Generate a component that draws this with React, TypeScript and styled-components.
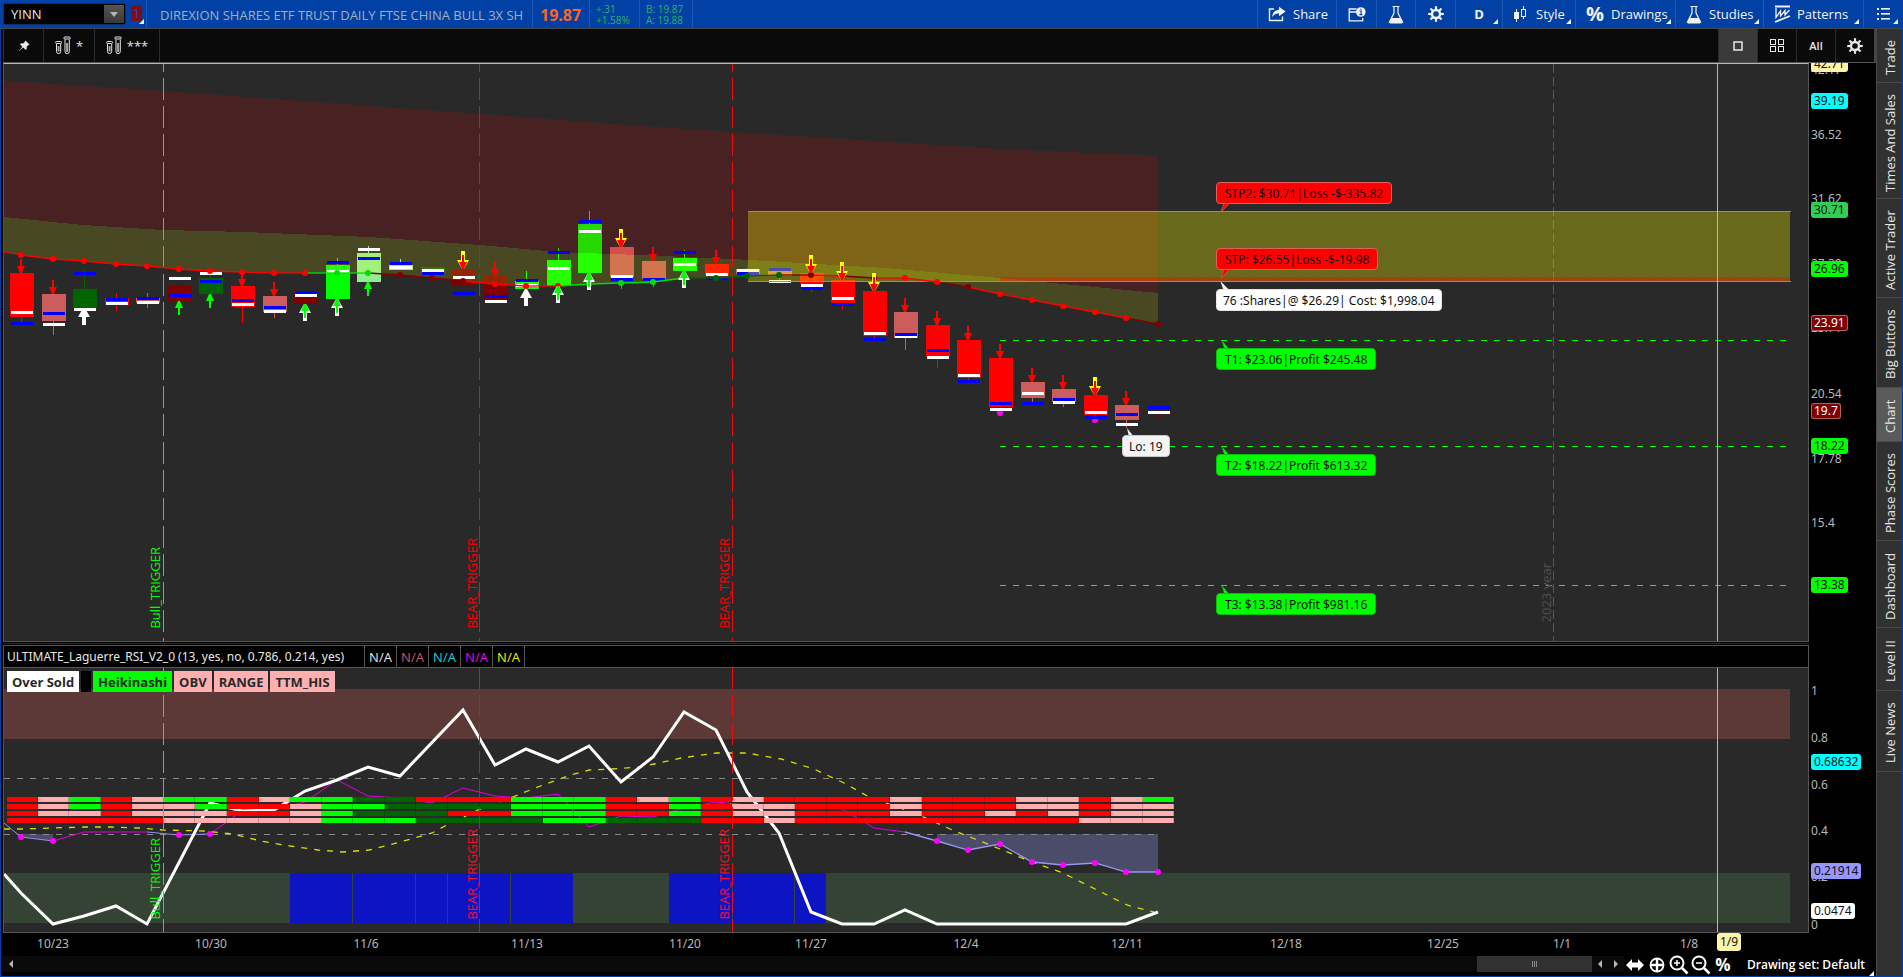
import React from 'react';
import styled, { createGlobalStyle, css } from 'styled-components';

const GlobalStyle = createGlobalStyle`
  html, body, #root { height: 100%; }
  body {
    margin: 0;
    background: #000;
    color: #e6e6e6;
    font-family: 'Open Sans', 'Noto Sans', sans-serif;
    font-size: 13px;
    line-height: 16px;
  }
  *, *::before, *::after { box-sizing: border-box; }
  button, input { font: inherit; color: inherit; }
  button { background: none; border: 0; padding: 0; }
`;

/* ---------- geometry shared by the plots and their labels ---------- */

const LEFT = 4;
const WIDTH = 1804;
const PRICE = { top: 64, height: 577 };
const STUDY = { top: 668, height: 264 };
type Pane = typeof PRICE;

const barX = (i: number) => Math.round(21 + 31.58 * i);
const pctX = (x: number) => `${((x - LEFT) / WIDTH) * 100}%`;
const pctY = (y: number, pane: Pane) => `${((y - pane.top) / pane.height) * 100}%`;

/* ---------- frame ---------- */

const Window = styled.div`
  display: flex;
  flex-direction: column;
  height: 100vh;
  min-height: 600px;
  overflow: hidden;
  border: 1px solid #0141a6;
  border-top: 0;
  background: #000;
`;

const TopBar = styled.header`
  display: flex;
  align-items: stretch;
  flex: none;
  height: 29px;
  background: #0141a6;
  border-bottom: 1px solid #44474d;
  padding-left: 2px;
`;

const Cell = styled.div<{ $width?: number; $pad?: number }>`
  display: flex;
  flex-direction: column;
  justify-content: center;
  flex: none;
  ${(p) => p.$width && `width: ${p.$width}px;`}
  padding-top: 2px;
  padding-left: ${(p) => p.$pad ?? 6}px;
  border-left: 1px solid #1f57b4;
  white-space: nowrap;
`;

const Symbol = styled.div`
  display: flex;
  align-items: center;
  align-self: center;
  width: 123px;
  height: 22px;
  padding: 1px;
  background: #000;
  border: 1px solid #10305f;
  border-radius: 2px;
`;

const SymbolInput = styled.input`
  flex: 1;
  min-width: 0;
  height: 18px;
  padding: 0 0 0 6px;
  background: #000;
  border: 0;
  outline: 0;
`;

const SymbolDrop = styled.button`
  display: flex;
  align-items: center;
  justify-content: center;
  width: 20px;
  height: 18px;
  background: linear-gradient(#555, #3a3a3a);
`;

const LinkBadge = styled.button`
  position: relative;
  align-self: center;
  width: 11px;
  height: 16px;
  margin: 0 4px 2px 5px;
  background: #7d0e14;
  border-radius: 3px;
  color: #2a4da6;
  line-height: 16px;
`;

const Company = styled.span`
  color: #a6adb8;
`;
const Last = styled.span`
  color: #ff6414;
  font-size: 16px;
  font-weight: 700;
`;
const Quote = styled.span`
  color: #2fb060;
  font-size: 10px;
  line-height: 11px;
`;

const Spacer = styled.div`
  flex: 1;
`;

const TopButton = styled.button<{ $width: number; $gap?: number }>`
  position: relative;
  display: flex;
  align-items: center;
  justify-content: flex-start;
  gap: ${(p) => p.$gap ?? 7}px;
  flex: none;
  width: ${(p) => p.$width}px;
  padding-left: 10px;
  border-left: 1px solid #1f57b4;
  color: #f2f2f2;
  white-space: nowrap;
`;

const TopIconButton = styled(TopButton)`
  justify-content: center;
  padding-left: 0;
`;

const Corner = styled.span`
  position: absolute;
  right: 4px;
  bottom: 4px;
  border-left: 5px solid transparent;
  border-bottom: 5px solid #f2f2f2;
`;

const BadgeCorner = styled(Corner)`
  right: -2px;
  bottom: -3px;
`;

const Percent = styled.b`
  font-size: 20px;
  line-height: 20px;
`;

const Body = styled.div`
  display: flex;
  flex: 1;
  min-height: 0;
`;

const Main = styled.main`
  display: flex;
  flex-direction: column;
  flex: 1;
  min-width: 0;
  margin-left: 2px;
`;

const Toolbar = styled.div`
  display: flex;
  flex: none;
  height: 34px;
  background: #0a0a0a;
  border-bottom: 1px solid #555;
  border-left: 1px solid #333;
  border-right: 2px solid #444;
`;

const Tool = styled.button<{ $width: number; $on?: boolean; $left?: boolean }>`
  display: flex;
  align-items: center;
  justify-content: center;
  gap: 5px;
  width: ${(p) => p.$width}px;
  background: ${(p) => (p.$on ? '#3a3a3a' : 'transparent')};
  color: #e6e6e6;
  ${(p) => (p.$left ? 'border-left' : 'border-right')}: 1px solid #2c2c2c;
`;

const Stars = styled.span`
  font-size: 13px;
`;

const AllText = styled.span`
  font-size: 11px;
  font-weight: 600;
`;

/* ---------- chart panes ---------- */

const PaneRow = styled.section<{ $grow: number }>`
  display: grid;
  grid-template-columns: 1fr 67px;
  flex: ${(p) => p.$grow} 1 0;
  min-height: 0;
`;

const Plot = styled.div<{ $cursor?: boolean }>`
  position: relative;
  overflow: hidden;
  background: #292929;
  border: 1px solid #555;
  border-top: ${(p) => (p.$cursor ? '1px solid #c4b98c' : '0')};
`;

const PlotSvg = styled.svg`
  display: block;
  position: absolute;
  inset: 0;
  width: 100%;
  height: 100%;
`;

const Axis = styled.div`
  position: relative;
  overflow: hidden;
  margin-bottom: 1px;
  font-family: 'Noto Sans', 'Open Sans', sans-serif;
`;

const AxisText = styled.span<{ $top: string }>`
  position: absolute;
  left: 2px;
  top: ${(p) => p.$top};
  margin-top: -8px;
  color: #b8b8b8;
  font-size: 12px;
`;

const tag = css<{ $bg: string; $fg?: string }>`
  padding: 0 3px;
  border-radius: 3px;
  background: ${(p) => p.$bg};
  color: ${(p) => p.$fg ?? '#111'};
  font-size: 12px;
`;

const AxisTag = styled.span<{ $top: string; $bg: string; $fg?: string }>`
  position: absolute;
  left: 2px;
  top: ${(p) => p.$top};
  margin-top: -8px;
  ${tag}
  box-shadow: ${(p) => (p.$fg ? 'inset 0 0 0 1px #b06060' : 'none')};
`;

const Callout = styled.span<{ $x: number; $y: number; $bg: string; $border: string; $pad: number }>`
  position: absolute;
  left: ${(p) => pctX(p.$x)};
  top: ${(p) => pctY(p.$y, PRICE)};
  padding: 3px ${(p) => p.$pad}px 1px;
  border: 1px solid ${(p) => p.$border};
  border-radius: 4px;
  background: ${(p) => p.$bg};
  color: #111;
  font-family: 'Noto Sans', 'Open Sans', sans-serif;
  font-size: 12px;
  white-space: nowrap;
`;

const Vertical = styled.span<{ $x: number; $bottom: number; $color: string }>`
  position: absolute;
  left: ${(p) => pctX(p.$x)};
  bottom: ${(p) => p.$bottom}px;
  margin-left: -16px;
  writing-mode: vertical-rl;
  transform: rotate(180deg);
  color: ${(p) => p.$color};
  white-space: nowrap;
`;

const Divider = styled.div`
  flex: none;
  height: 3px;
  border-top: 1px solid #000;
  border-bottom: 1px solid #000;
  background: #2a2a2a;
  margin-right: 67px;
`;

const StudyHeader = styled.div`
  display: flex;
  flex: none;
  height: 23px;
  margin-right: 67px;
  border: 1px solid #555;
`;

const StudyName = styled.span`
  width: 360px;
  padding: 3px 0 0 3px;
  font-family: 'Noto Sans', 'Open Sans', sans-serif;
  font-size: 12px;
  white-space: nowrap;
`;

const StudyValue = styled.span<{ $color: string }>`
  width: 32px;
  padding-top: 3px;
  border-left: 1px solid #555;
  color: ${(p) => p.$color};
  text-align: center;
`;

const StudyEnd = styled.span`
  border-left: 1px solid #555;
`;

const Chips = styled.div`
  position: absolute;
  left: 3px;
  top: 3px;
  display: flex;
  gap: 2px;
`;

const Chip = styled.span<{ $bg: string }>`
  height: 21px;
  padding: 3px 5px 0;
  background: ${(p) => p.$bg};
  color: #292929;
  font-weight: 700;
`;

const DateAxis = styled.div`
  position: relative;
  flex: none;
  height: 23px;
  margin: 0 68px 0 1px;
  font-family: 'Noto Sans', 'Open Sans', sans-serif;
`;

const DateText = styled.span<{ $x: number }>`
  position: absolute;
  left: ${(p) => pctX(p.$x)};
  top: 3px;
  width: 40px;
  margin-left: -20px;
  color: #b8b8b8;
  font-size: 12px;
  text-align: center;
`;

const DateTag = styled.span<{ $x: number; $bg: string; $fg?: string }>`
  position: absolute;
  left: ${(p) => pctX(p.$x)};
  top: 0;
  ${tag}
  padding: 1px 3px;
`;

const Footer = styled.footer`
  display: flex;
  align-items: flex-start;
  flex: none;
  height: 20px;
`;

const Track = styled.div`
  display: flex;
  align-items: center;
  flex: 1;
  height: 16px;
  background: #0a0a0a;
`;

const ScrollArrow = styled.button`
  display: flex;
  justify-content: center;
  width: 16px;
`;

const Thumb = styled.div`
  display: flex;
  align-items: center;
  justify-content: center;
  gap: 1px;
  width: 115px;
  height: 16px;
  background: #323232;
`;

const Grip = styled.i`
  width: 1px;
  height: 6px;
  background: #888;
`;

const ZoomBar = styled.div`
  display: flex;
  align-items: center;
  height: 17px;
`;

const ZoomButton = styled.button`
  display: flex;
  align-items: center;
  justify-content: center;
  width: 22px;
  height: 20px;
  color: #fff;
`;

const SmallPercent = styled.b`
  font-size: 17px;
  line-height: 16px;
`;

const DrawingSet = styled.button`
  position: relative;
  width: 142px;
  padding: 0 0 0 13px;
  color: #fff;
  font-size: 12px;
  font-weight: 600;
  text-align: left;
  white-space: nowrap;
`;

const SetCorner = styled(Corner)`
  right: 2px;
  bottom: -3px;
`;

const Sidebar = styled.nav`
  display: flex;
  flex-direction: column;
  flex: none;
  width: 26px;
  background: #313131;
  border-left: 1px solid #4a4a4a;
`;

const SideTab = styled.button<{ $on?: boolean; $size: number }>`
  flex: none;
  display: flex;
  align-items: center;
  justify-content: center;
  height: ${(p) => p.$size}px;
  padding-bottom: 4px;
  writing-mode: vertical-rl;
  transform: rotate(180deg);
  background: ${(p) => (p.$on ? '#5a5a5a' : '#313131')};
  border-top: 1px solid #4a4a4a;
  color: #e6e6e6;
  white-space: nowrap;
`;

/* ---------- icons ---------- */

const Gear = () => (
  <svg width="18" height="18" viewBox="0 0 18 18" fill="none" stroke="currentColor">
    <circle cx="9" cy="9" r="4" strokeWidth="2.4" />
    {[0, 45, 90, 135, 180, 225, 270, 315].map((a) => (
      <path key={a} d="M9 1.2V4.5" strokeWidth="2.2" transform={`rotate(${a} 9 9)`} />
    ))}
  </svg>
);

const Flask = () => (
  <svg width="16" height="19" viewBox="0 0 16 19" fill="none" stroke="currentColor">
    <path d="M4.5 1.5h7M6 1.5V8L1.5 17h13L10 8V1.5" strokeWidth="1.2" />
    <path d="M3.6 13h8.8l2.4 4.2-.8 1.3H2l-.8-1.3z" fill="currentColor" stroke="none" />
  </svg>
);

const ShareIcon = () => (
  <svg width="18" height="16" viewBox="0 0 18 16" fill="none">
    <path d="M6 3H1.5v11.5h13V10.5" stroke="currentColor" strokeWidth="1.4" />
    <path d="M11 .8 17.6 5.6 11 10.3V7.4C8 7.2 6 8.4 4.3 11 4.3 6.5 7 4 11 3.7z" fill="currentColor" />
  </svg>
);

const InfoWindow = () => (
  <svg width="18" height="15" viewBox="0 0 18 15" fill="none">
    <path d="M8.5 2H1.2v11.8h13.5V11M1.2 5h7.3" stroke="currentColor" strokeWidth="1.3" />
    <circle cx="12.8" cy="5" r="4.8" fill="currentColor" />
    <path d="M11.6 4h1.5v3.5M11.4 7.6h3M12.3 2.3h1.2" stroke="#0141a6" strokeWidth="1.1" />
  </svg>
);

const StyleIcon = () => (
  <svg width="14" height="16" viewBox="0 0 14 16">
    <path d="M3.5 3v13M10.5 0v13" stroke="currentColor" />
    <rect x="1" y="6" width="5" height="7" fill="currentColor" />
    <rect x="8.5" y="3.5" width="4" height="7" fill="#0141a6" stroke="currentColor" />
  </svg>
);

const PatternIcon = () => (
  <svg width="17" height="18" viewBox="0 0 17 18" fill="none" stroke="currentColor">
    <path d="M1 1.5h15M1 17 16 11" strokeWidth="1.8" />
    <path d="M2 3v9.5L6.5 6v5L11 5.5v4.5L15.5 5" strokeWidth="1.3" />
  </svg>
);

const ListIcon = () => (
  <svg width="13" height="12" viewBox="0 0 13 12" fill="currentColor">
    {[0, 5, 10].map((y) => (
      <g key={y}>
        <rect x="0" y={y} width="2" height="2" />
        <rect x="4" y={y} width="9" height="1.6" />
      </g>
    ))}
  </svg>
);

const Pin = () => (
  <svg width="12" height="12" viewBox="0 0 12 12" fill="currentColor">
    <path d="M7.5.5 11.5 4.5 10.5 5 8.8 6.5 8.5 9.5 7.5 9.8 5.2 7.5.5 11.5 4.4 6.7 2.2 4.5 2.5 3.5 5.5 3.2 7 1.5z" />
  </svg>
);

const Tubes = () => (
  <svg width="16" height="19" viewBox="0 0 16 19" fill="none" stroke="currentColor">
    <rect x=".6" y="5.5" width="6" height="2" rx="1" />
    <path d="M1.5 8v7.5a2 2 0 0 0 4.2 0V8" />
    <rect x="8.8" y="1" width="6.5" height="2" rx="1" />
    <path d="M10 3.5v12a2.1 2.1 0 0 0 4.3 0v-12" />
    <path d="M3.6 10v5.5M12.1 7v9" strokeWidth="2" opacity=".7" />
  </svg>
);

const OnePane = () => (
  <svg width="10" height="10" viewBox="0 0 10 10" fill="none" stroke="currentColor">
    <rect x="1" y="1" width="8" height="8" strokeWidth="1.5" />
  </svg>
);

const FourPanes = () => (
  <svg width="14" height="13" viewBox="0 0 14 13" fill="none" stroke="currentColor" shapeRendering="crispEdges">
    <path d="M.5.5h5v5h-5zM8.5.5h5v5h-5zM.5 7.5h5v5h-5zM8.5 7.5h5v5h-5z" />
  </svg>
);

const Fit = () => (
  <svg width="18" height="12" viewBox="0 0 18 12" fill="currentColor">
    <path d="M0 6 6 0v3.5h6V0l6 6-6 6V8.5H6V12z" />
  </svg>
);

const Crosshair = () => (
  <svg width="16" height="16" viewBox="0 0 16 16" fill="none" stroke="currentColor">
    <circle cx="8" cy="8" r="6.5" strokeWidth="1.8" />
    <path d="M8 2v12M2 8h12" strokeWidth="2.4" />
  </svg>
);

const Zoom = ({ plus }: { plus?: boolean }) => (
  <svg width="20" height="20" viewBox="0 0 20 20" fill="none" stroke="currentColor">
    <circle cx="8" cy="8" r="6.5" strokeWidth="2" />
    <path d="M13 13l5.5 5.5" strokeWidth="2.6" />
    <path d={plus ? 'M5 8h6M8 5v6' : 'M5 8h6'} strokeWidth="1.5" />
  </svg>
);

const Triangle = ({ d }: { d: string }) => (
  <svg width="8" height="8" viewBox="0 0 8 8">
    <path d={d} fill="#b5b5b5" />
  </svg>
);

/* ---------- price data ---------- */

const RED = '#ff0000';
const PALE = '#cd5c5c';
const DARK = '#800000';
const LIME = '#00ff00';
const GREEN = '#006400';
const MINT = '#90ee90';
const BLUE = '#0000ff';

type Mark = 'down' | 'downY' | 'up' | 'upW' | 'white';
interface Bar {
  c: string;
  body: [number, number];
  wick?: [number, number];
  blue?: number;
  white?: number;
  mark?: [Mark, number];
  dot?: number;
}

const BARS: Bar[] = [
  { c: RED, body: [273, 317], wick: [273, 323], blue: 323, white: 312, mark: ['down', 273] },
  { c: PALE, body: [294, 321], wick: [294, 335], blue: 313, white: 324, mark: ['down', 294] },
  { c: GREEN, body: [289, 308], wick: [269, 308], blue: 273, white: 309, mark: ['white', 308] },
  { c: RED, body: [298, 305], wick: [293, 311], blue: 299, white: 303 },
  { c: PALE, body: [298, 303], wick: [293, 308], blue: 298, white: 302 },
  { c: DARK, body: [286, 301], wick: [277, 301], blue: 295, white: 278, mark: ['up', 301] },
  { c: GREEN, body: [278, 294], wick: [272, 294], blue: 281, white: 273, mark: ['up', 294] },
  { c: RED, body: [286, 307], wick: [286, 323], blue: 300, white: 304, mark: ['down', 286] },
  { c: PALE, body: [296, 312], wick: [296, 318], blue: 307, white: 311, mark: ['down', 296] },
  { c: DARK, body: [292, 304], blue: 292, white: 295, mark: ['upW', 304] },
  { c: LIME, body: [265, 299], wick: [258, 299], blue: 262, white: 271, mark: ['upW', 299] },
  { c: MINT, body: [253, 282], wick: [246, 282], blue: 258, white: 249, mark: ['up', 282] },
  { c: MINT, body: [265, 270], wick: [259, 270], blue: 263, white: 267 },
  { c: GREEN, body: [267, 274], blue: 273, white: 270 },
  { c: DARK, body: [269, 285], blue: 293, white: 277, mark: ['downY', 269] },
  { c: DARK, body: [276, 300], wick: [276, 307], blue: 296, white: 301, mark: ['down', 276] },
  { c: LIME, body: [281, 289], wick: [271, 289], blue: 280, white: 285, mark: ['white', 289] },
  { c: LIME, body: [260, 286], wick: [248, 286], blue: 252, white: 268, mark: ['upW', 286] },
  { c: LIME, body: [224, 273], wick: [211, 273], blue: 221, white: 231, mark: ['upW', 273] },
  { c: PALE, body: [247, 277], wick: [247, 289], blue: 279, white: 276, mark: ['downY', 247] },
  { c: PALE, body: [261, 279], wick: [261, 287], blue: 279, mark: ['down', 261] },
  { c: LIME, body: [258, 271], wick: [250, 271], blue: 252, white: 264, mark: ['upW', 271] },
  { c: RED, body: [264, 275], blue: 278, white: 274, mark: ['down', 264] },
  { c: PALE, body: [269, 274], wick: [268, 275], blue: 273, white: 270 },
  { c: PALE, body: [271, 276], wick: [271, 282], blue: 269, white: 281 },
  { c: RED, body: [273, 284], wick: [273, 292], blue: 288, white: 285, mark: ['downY', 273] },
  { c: RED, body: [280, 303], wick: [280, 310], blue: 304, white: 298, mark: ['downY', 280] },
  { c: RED, body: [291, 336], wick: [291, 339], blue: 339, white: 333, mark: ['downY', 291] },
  { c: PALE, body: [312, 338], wick: [312, 350], blue: 334, white: 336, mark: ['down', 312] },
  { c: RED, body: [325, 357], wick: [325, 368], blue: 350, white: 357, mark: ['down', 325] },
  { c: RED, body: [340, 378], wick: [340, 383], blue: 381, white: 375, mark: ['down', 340] },
  { c: RED, body: [358, 407], wick: [358, 411], blue: 403, white: 409, mark: ['down', 358], dot: 413 },
  { c: PALE, body: [382, 398], wick: [382, 404], blue: 403, white: 393, mark: ['down', 382] },
  { c: PALE, body: [389, 402], wick: [389, 407], blue: 399, white: 402, mark: ['down', 389] },
  { c: RED, body: [395, 415], wick: [395, 420], blue: 417, white: 412, mark: ['downY', 395], dot: 420 },
  { c: PALE, body: [405, 420], wick: [405, 428], blue: 414, white: 424, mark: ['down', 405] },
  { c: DARK, body: [411, 413], wick: [408, 420], blue: 407, white: 412 },
];

const AVG_Y = [
  255, 259, 261, 264, 266, 269, 271, 272, 273, 273, 273, 273, 275, 278, 281, 284, 286, 286, 284, 283, 282, 278,
  278, 276, 275, 275, 276, 278, 278, 282, 287, 294, 300, 306, 312, 318, 324,
];
const AVG_COLOR = [
  RED, RED, RED, RED, RED, RED, RED, RED, RED, RED, '#00e000', '#00e000', DARK, DARK, DARK, RED, RED, RED, '#00e000',
  '#00e000', '#00e000', '#00e000', GREEN, GREEN, GREEN, DARK, RED, DARK, RED, RED, DARK, RED, RED, RED, RED, RED, DARK,
];

const CLOUD_TOP = '4,81 163,91 480,114 640,126 732,132 905,143 1000,149 1158,156';
const CLOUD_MID = '1158,293 1000,278 885,268 732,259 640,255 557,252 480,245 369,237 245,232 163,230 83,225 4,217';
const CLOUD_MID_FWD = CLOUD_MID.split(' ').reverse().join(' ');
const avgPoints = AVG_Y.map((y, i) => `${barX(i)},${y}`);
const CLOUD_LOW = [...avgPoints].reverse().join(' ') + ' 4,252';

const Arrow = ({ kind, x, y }: { kind: Mark; x: number; y: number }) => {
  const down = `M${x - 1} ${y - 14}h2v7h3l-3 7h-2l-3 -7h3z`;
  const up = `M${x - 1} ${y + 14}h2v-7h3l-3 -7h-2l-3 7h3z`;
  const wideDown = `M${x - 2} ${y - 18}h4v9h4l-5 9h-2l-5 -9h4z`;
  const wideUp = `M${x - 2} ${y + 17}h4v-8h4l-5 -9h-2l-5 9h4z`;
  return (
    <g shapeRendering="auto">
      {kind === 'downY' && <path d={wideDown} fill="#ff0" />}
      {(kind === 'upW' || kind === 'white') && <path d={wideUp} fill="#fff" />}
      {(kind === 'down' || kind === 'downY') && <path d={down} fill={RED} />}
      {(kind === 'up' || kind === 'upW') && <path d={up} fill={LIME} />}
    </g>
  );
};

const Triggers = ({ y1, y2, offset }: { y1: number; y2: number; offset: number }) => (
  <g strokeDasharray="22 6" strokeDashoffset={offset}>
    <path d={`M163.5 ${y1}V${y2}`} stroke={LIME} />
    <path d={`M479.5 ${y1}V${y2}`} stroke="#fa0808" />
    <path d={`M732.5 ${y1}V${y2}`} stroke="#ec0c0c" />
  </g>
);

const CALLOUTS = [
  { text: 'STP2: $30.71|Loss -$-335.82', y: 182, bg: RED, border: '#e06060', pad: 8, tail: '1224,203 1230,203 1221,212' },
  { text: 'STP: $26.55|Loss -$-19.98', y: 248, bg: RED, border: '#e06060', pad: 8, tail: '1224,269 1230,269 1221,278' },
  { text: '76 :Shares|@ $26.29| Cost: $1,998.04', y: 289, bg: '#fff', border: '#e4e4e4', pad: 6, tail: '1224,291 1230,291 1221,282' },
  { text: 'T1: $23.06|Profit $245.48', y: 348, bg: LIME, border: '#08c008', pad: 8, tail: '1225,350 1230,350 1222,341' },
  { text: 'T2: $18.22|Profit $613.32', y: 454, bg: LIME, border: '#08c008', pad: 8, tail: '1225,456 1230,456 1222,447' },
  { text: 'T3: $13.38|Profit $981.16', y: 593, bg: LIME, border: '#08c008', pad: 8, tail: '1225,595 1230,595 1222,586' },
];

const PricePlot = () => (
  <Plot $cursor>
    <PlotSvg viewBox={`${LEFT} ${PRICE.top} ${WIDTH} ${PRICE.height}`} preserveAspectRatio="none" shapeRendering="crispEdges" fill="none">
      <path d="M1553.5 64V641" stroke="#585858" strokeDasharray="9 4" />
      {BARS.map((b, i) => {
        const x = barX(i);
        return (
          <g key={i}>
            {b.wick && <path d={`M${x + 0.5} ${b.wick[0]}V${b.wick[1]}`} stroke={b.c} />}
            <rect x={x - 11} y={b.body[0]} width="24" height={b.body[1] - b.body[0]} fill={b.c} />
          </g>
        );
      })}
      <polygon points={`${CLOUD_TOP} ${CLOUD_MID}`} fill={RED} fillOpacity=".15" />
      <polygon points={`${CLOUD_MID_FWD} ${CLOUD_LOW}`} fill="#ff0" fillOpacity=".15" />
      {BARS.map((b, i) => {
        const x = barX(i);
        return (
          <g key={i}>
            {b.dot && <circle cx={x} cy={b.dot} r="3" fill="#f0f" shapeRendering="auto" />}
            {b.white && <rect x={x - 10} y={b.white - 1} width="22" height="3" fill="#fff" />}
            {b.blue && <rect x={x - 10} y={b.blue - 1} width="22" height="3" fill={BLUE} />}
          </g>
        );
      })}
      <rect x="748" y="211" width="1042" height="71" fill="#ff0" fillOpacity=".3" />
      <rect x="1000" y="277" width="790" height="5" fill={RED} fillOpacity=".35" />
      <path d="M748 211.5H1791" stroke="#52b84e" />
      <path d="M748 281.5H1791" stroke="#ee7030" />
      <path d="M1000 277.5H1788" stroke="#f01c10" strokeDasharray="6 7" />
      {[340.5, 446.5, 585.5].map((y) => (
        <path key={y} d={`M1000 ${y}H1788`} stroke={LIME} strokeDasharray="6 7" />
      ))}
      <Triggers y1={64} y2={641} offset={14} />
      <g shapeRendering="auto">
        <path d={`M4 252L${barX(0)} 255`} stroke={RED} />
        {AVG_Y.slice(1).map((y, i) => (
          <path key={i} d={`M${barX(i)} ${AVG_Y[i]}L${barX(i + 1)} ${y}`} stroke={AVG_COLOR[i + 1]} strokeWidth="1.3" />
        ))}
        {AVG_Y.map((y, i) => (
          <circle key={i} cx={barX(i)} cy={y} r="3" fill={AVG_COLOR[i]} />
        ))}
        {BARS.map((b, i) => b.mark && <Arrow key={i} kind={b.mark[0]} x={barX(i)} y={b.mark[1]} />)}
        {CALLOUTS.map((c) => (
          <polygon key={c.text} points={c.tail} fill={c.bg} stroke={c.border} strokeWidth=".6" />
        ))}
        <polygon points="1129,437 1134,437 1127,428" fill="#f4f4f4" />
      </g>
      <path d="M1717.5 64V641" stroke="#c6bb7e" />
    </PlotSvg>
    <Vertical $x={163} $bottom={12} $color={LIME}>Bull_TRIGGER</Vertical>
    <Vertical $x={480} $bottom={12} $color={RED}>BEAR_TRIGGER</Vertical>
    <Vertical $x={732} $bottom={12} $color={RED}>BEAR_TRIGGER</Vertical>
    <Vertical $x={1554} $bottom={19} $color="#505050">2023 year</Vertical>
    {CALLOUTS.map((c) => (
      <Callout key={c.text} $x={1216} $y={c.y} $bg={c.bg} $border={c.border} $pad={c.pad}>{c.text}</Callout>
    ))}
    <Callout $x={1122} $y={435} $bg="#f4f4f4" $border="#c8c8c8" $pad={6}>Lo: 19</Callout>
  </Plot>
);

const PRICE_TEXT: [string, number][] = [
  ['42.17', 71], ['36.52', 136], ['31.62', 200], ['27.38', 265], ['23.71', 329], ['20.54', 394], ['17.78', 459], ['15.4', 523],
];
const PRICE_TAGS: [string, number, string, string?][] = [
  ['42.71', 65, '#fff5a8'], ['39.19', 102, '#00ffff'], ['30.71', 211, '#32cd55'], ['26.96', 270, LIME],
  ['23.91', 324, DARK, '#fff'], ['19.7', 411, DARK, '#fff'], ['18.22', 446, LIME], ['13.38', 585, LIME],
];
const STUDY_TEXT: [string, number][] = [
  ['1', 691], ['0.8', 738], ['0.6', 785], ['0.4', 831], ['0.2', 877], ['0', 925],
];
const STUDY_TAGS: [string, number, string, string?][] = [
  ['0.68632', 762, '#00ffff'], ['0.21914', 871, '#9696ff'], ['0.0474', 911, '#fff'],
];

const ValueAxis = ({ texts, tags, pane }: { texts: [string, number][]; tags: [string, number, string, string?][]; pane: Pane }) => (
  <Axis>
    {texts.map(([t, y]) => <AxisText key={t} $top={pctY(y, pane)}>{t}</AxisText>)}
    {tags.map(([t, y, bg, fg]) => <AxisTag key={t} $top={pctY(y, pane)} $bg={bg} $fg={fg}>{t}</AxisTag>)}
  </Axis>
);

/* ---------- study data ---------- */

const HEAT: Record<string, string> = { R: RED, P: '#ffafaf', G: LIME, D: GREEN };
const HEAT_ROWS = [
  'RPGRPGGRPGGDDRRRGGGRPGRPRRRRPRRRPPRPG',
  'RPGRPPGRRPGGDDDDGGGRRGRPPRRRPRRRPPRPP',
  'RPPRPPPRRPGDDDRRGGGRRGRPPRRRPRRPRPRPP',
  'RRRRRPPPPPGGGDDDDGGDDDRRPRRRRRRRRRPPP',
];
const HEAT_Y = [797, 804, 811, 818];

const RSI: [number, number][] = [
  [0, 893], [1, 924], [2, 916], [3, 906], [4, 924], [6, 803], [7, 811], [8, 810], [9, 791], [10, 780], [11, 767],
  [12, 776], [14, 710], [15, 765], [16, 749], [17, 762], [18, 746], [19, 782], [20, 757], [21, 712], [22, 730],
  [23, 792], [24, 833], [25, 912], [26, 924], [27, 924], [28, 910], [29, 924], [35, 924], [36, 912],
];
const FE_Y = [
  837, 841, 832, 832, 832, 835, 834, 811, 810, 802, 780, 796, 798, 803, 788, 796, 798, 794, 827, 816, 817, 808, 802,
  805, 805, 806, 809, 828, 832, 841, 850, 844, 862, 865, 863, 872, 872,
];
const FE_DOTS = [0, 1, 5, 6, 29, 30, 31, 32, 33, 34, 35, 36];
const fe = (from: number, to: number) =>
  FE_Y.slice(from, to + 1).map((y, i) => `${barX(from + i)},${y}`).join(' ');

const SIGNAL =
  '4,829 21,829 53,828 84,827 110,827 139,828 163,830 204,831 233,834 261,841 290,846 318,850 343,852 369,850 400,842 ' +
  '432,833 445,826 478,810 510,798 543,785 571,775 589,770 612,769 640,767 654,764 681,758 716,753 747,753 781,759 ' +
  '814,769 844,783 869,797 903,809 926,818 950,829 975,839 1000,849 1032,862 1063,873 1095,889 1127,905 1154,912';

const BLUE_ZONES = [[290, 352], [353, 415], [416, 447], [448, 510], [511, 573], [669, 732], [733, 794], [795, 826]];

const StudyPlot = () => (
  <Plot>
    <PlotSvg viewBox={`${LEFT} ${STUDY.top} ${WIDTH} ${STUDY.height}`} preserveAspectRatio="none" shapeRendering="crispEdges" fill="none">
      <rect x="4" y="689" width="1786" height="50" fill="#5c3837" />
      <rect x="4" y="873" width="1786" height="50" fill="#344334" />
      {BLUE_ZONES.map(([a, b]) => (
        <rect key={a} x={a} y="873" width={b - a} height="50" fill="#0d14c4" />
      ))}
      <polygon points={`${barX(0)},834 ${fe(0, 1)} ${barX(1)},834`} fill="#4b4c69" />
      <polygon points={`${barX(29)},834 ${fe(29, 36)} ${barX(36)},834`} fill="#4b4c69" />
      <path d="M4 778.5H1158M4 834.5H1158" stroke="#8a8a8a" strokeDasharray="6 7" />
      <g shapeRendering="auto">
        <polyline points={`4,823 ${fe(0, 1)}`} stroke="#8f8fef" />
        <polyline points={fe(1, 4)} stroke="#e000e0" />
        <polyline points={fe(4, 6)} stroke="#8f8fef" />
        <polyline points={fe(6, 28)} stroke="#e000e0" />
        <polyline points={fe(28, 36)} stroke="#9696f5" strokeWidth="1.3" />
        <polyline points={SIGNAL} stroke="#dcdc00" strokeWidth="1.3" strokeDasharray="6 7" />
        <polyline points={`4,874 ${RSI.map(([i, y]) => `${barX(i)},${y}`).join(' ')}`} stroke="#fff" strokeWidth="3" />
        {FE_DOTS.map((i) => (
          <circle key={i} cx={barX(i)} cy={FE_Y[i]} r="3" fill="#f0f" />
        ))}
      </g>
      {HEAT_ROWS.map((row, r) =>
        row.split('').map((k, i) => {
          const x = i === 0 ? 7 : Math.round(6 + 31.57 * i);
          const end = Math.round(6 + 31.57 * (i + 1));
          return (
            <g key={`${r}-${i}`}>
              <rect x={x} y={HEAT_Y[r]} width={end - x} height="5" fill={HEAT[k]} />
              <rect x={end - 1} y={HEAT_Y[r]} width="1" height="5" fill="#000" fillOpacity=".2" />
            </g>
          );
        }),
      )}
      <Triggers y1={668} y2={932} offset={1} />
      <path d="M1717.5 668V932" stroke="#c6bb7e" />
    </PlotSvg>
    <Vertical $x={163} $bottom={12} $color={LIME}>Bull_TRIGGER</Vertical>
    <Vertical $x={480} $bottom={12} $color="#f4102a">BEAR_TRIGGER</Vertical>
    <Vertical $x={732} $bottom={12} $color="#f4102a">BEAR_TRIGGER</Vertical>
    <Chips>
      <Chip $bg="#fff">Over Sold</Chip>
      <Chip $bg="#000" />
      <Chip $bg={LIME}>Heikinashi</Chip>
      <Chip $bg="#ffafaf">OBV</Chip>
      <Chip $bg="#ffafaf">RANGE</Chip>
      <Chip $bg="#ffafaf">TTM_HIS</Chip>
    </Chips>
  </Plot>
);

const DATES: [string, number][] = [
  ['10/23', 53], ['10/30', 211], ['11/6', 366], ['11/13', 527], ['11/20', 685], ['11/27', 811], ['12/4', 966],
  ['12/11', 1127], ['12/18', 1286], ['12/25', 1443], ['1/1', 1562], ['1/8', 1689],
];

const TABS: [string, number][] = [
  ['Trade', 54], ['Times And Sales', 116], ['Active Trader', 99], ['Big Buttons', 90], ['Chart', 54],
  ['Phase Scores', 99], ['Dashboard', 87], ['Level II', 63], ['Live News', 81],
];

export default function App() {
  return (
    <Window>
      <GlobalStyle />
      <TopBar>
        <Symbol>
          <SymbolInput aria-label="Symbol" defaultValue="YINN" />
          <SymbolDrop aria-label="Recent symbols"><Triangle d="M0 2h8L4 7z" /></SymbolDrop>
        </Symbol>
        <LinkBadge aria-label="Link 1">1<BadgeCorner /></LinkBadge>
        <Cell $width={386} $pad={13}><Company>DIREXION SHARES ETF TRUST DAILY FTSE CHINA BULL 3X SH</Company></Cell>
        <Cell $width={57} $pad={7}><Last>19.87</Last></Cell>
        <Cell $width={50}><Quote>+.31</Quote><Quote>+1.58%</Quote></Cell>
        <Cell $width={53}><Quote>B: 19.87</Quote><Quote>A: 19.88</Quote></Cell>
        <Cell $width={1} $pad={0} />
        <Spacer />
        <TopButton $width={79}><ShareIcon />Share</TopButton>
        <TopIconButton $width={40} aria-label="Chart info"><InfoWindow /></TopIconButton>
        <TopIconButton $width={39} aria-label="Edit studies"><Flask /></TopIconButton>
        <TopIconButton $width={40} aria-label="Chart settings"><Gear /></TopIconButton>
        <TopIconButton $width={47}><b>D</b><Corner /></TopIconButton>
        <TopButton $width={73} $gap={9}><StyleIcon />Style<Corner /></TopButton>
        <TopButton $width={100}><Percent>%</Percent>Drawings<Corner /></TopButton>
        <TopButton $width={88}><Flask />Studies<Corner /></TopButton>
        <TopButton $width={100} $gap={6}><PatternIcon />Patterns<Corner /></TopButton>
        <TopIconButton $width={39} aria-label="Menu"><ListIcon /><Corner /></TopIconButton>
      </TopBar>
      <Body>
        <Main>
          <Toolbar>
            <Tool $width={40} aria-label="Pin"><Pin /></Tool>
            <Tool $width={51}><Tubes /><Stars>*</Stars></Tool>
            <Tool $width={65}><Tubes /><Stars>***</Stars></Tool>
            <Spacer />
            <Tool $width={39} $on $left aria-label="Single chart"><OnePane /></Tool>
            <Tool $width={39} $left aria-label="Grid"><FourPanes /></Tool>
            <Tool $width={39} $left><AllText>All</AllText></Tool>
            <Tool $width={39} $left aria-label="Settings"><Gear /></Tool>
          </Toolbar>
          <PaneRow $grow={579}>
            <PricePlot />
            <ValueAxis texts={PRICE_TEXT} tags={PRICE_TAGS} pane={PRICE} />
          </PaneRow>
          <Divider />
          <StudyHeader>
            <StudyName>ULTIMATE_Laguerre_RSI_V2_0 (13, yes, no, 0.786, 0.214, yes)</StudyName>
            <StudyValue $color="#e6e6e6">N/A</StudyValue>
            <StudyValue $color="#d8506e">N/A</StudyValue>
            <StudyValue $color="#14d2dc">N/A</StudyValue>
            <StudyValue $color="#f000f0">N/A</StudyValue>
            <StudyValue $color="#f0f000">N/A</StudyValue>
            <StudyEnd />
          </StudyHeader>
          <PaneRow $grow={265}>
            <StudyPlot />
            <ValueAxis texts={STUDY_TEXT} tags={STUDY_TAGS} pane={STUDY} />
          </PaneRow>
          <DateAxis>
            {DATES.map(([t, x]) => <DateText key={t} $x={x}>{t}</DateText>)}
            <DateTag $x={1717} $bg="#fff5a8">1/9</DateTag>
          </DateAxis>
          <Footer>
            <Track>
              <ScrollArrow aria-label="Scroll left"><Triangle d="M6 0v8L2 4z" /></ScrollArrow>
              <Spacer />
              <Thumb><Grip /><Grip /><Grip /></Thumb>
              <ScrollArrow aria-label="Step back"><Triangle d="M6 0v8L2 4z" /></ScrollArrow>
              <ScrollArrow aria-label="Step forward"><Triangle d="M2 0v8L6 4z" /></ScrollArrow>
            </Track>
            <ZoomBar>
              <ZoomButton aria-label="Fit"><Fit /></ZoomButton>
              <ZoomButton aria-label="Crosshair"><Crosshair /></ZoomButton>
              <ZoomButton aria-label="Zoom in"><Zoom plus /></ZoomButton>
              <ZoomButton aria-label="Zoom out"><Zoom /></ZoomButton>
              <ZoomButton><SmallPercent>%</SmallPercent></ZoomButton>
              <DrawingSet>Drawing set: Default<SetCorner /></DrawingSet>
            </ZoomBar>
          </Footer>
        </Main>
        <Sidebar>
          {TABS.map(([t, size]) => <SideTab key={t} $size={size} $on={t === 'Chart'}>{t}</SideTab>)}
        </Sidebar>
      </Body>
    </Window>
  );
}
